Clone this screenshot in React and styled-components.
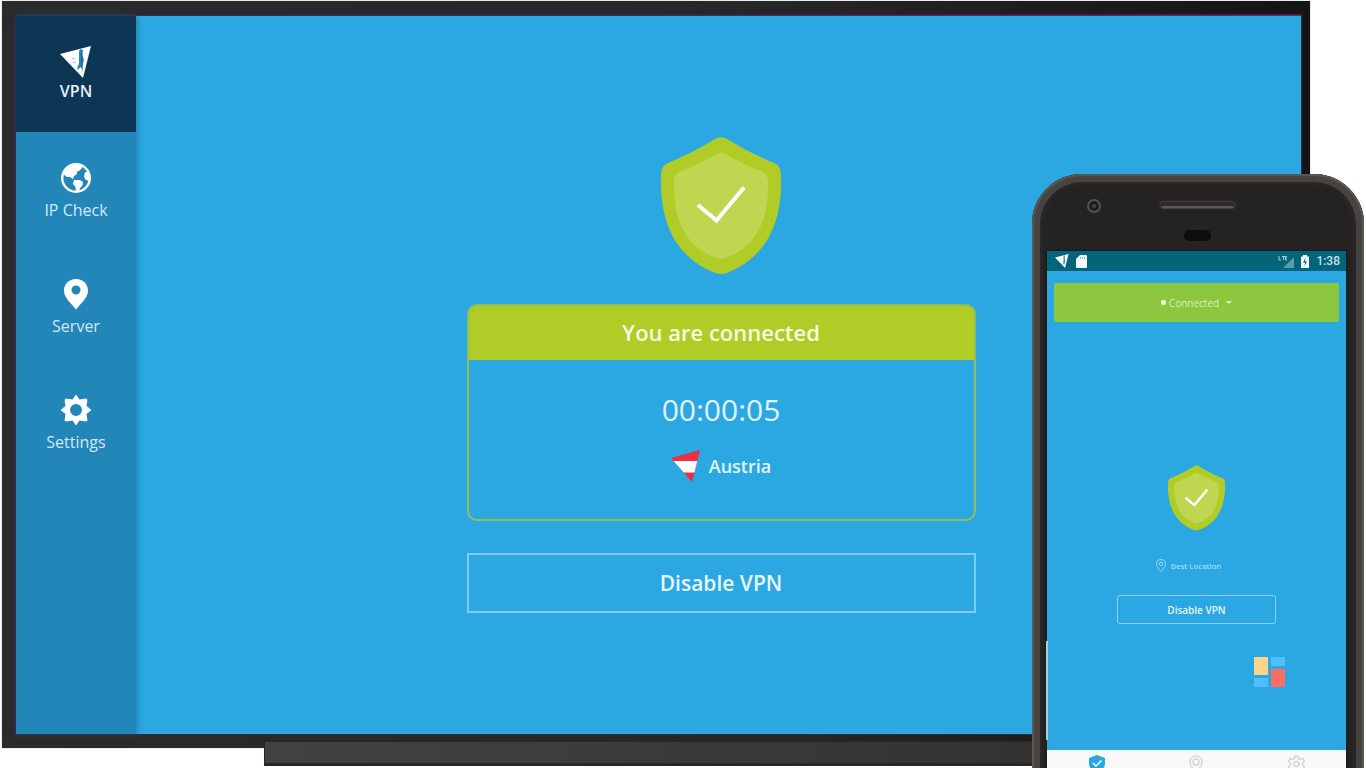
import React from "react";
import styled, { createGlobalStyle } from "styled-components";

const GlobalStyle = createGlobalStyle`
    * {
        box-sizing: border-box;
    }

    body {
        margin: 0;
        background: #ffffff;
        font-family: "Open Sans", "Noto Sans", sans-serif;
        color: #ffffff;
    }

    button {
        font-family: inherit;
        color: inherit;
        background: none;
        border: none;
        padding: 0;
        cursor: pointer;
    }
`;

const Scene = styled.div`
    position: relative;
    height: 100vh;
    min-height: 640px;
    overflow: hidden;
    padding: 1px 56px 0 2px;
`;

/* television */

const Television = styled.section`
    display: flex;
    flex-direction: column;
    min-height: calc(100% - 20px);
    padding: 14px 9px 14px 14px;
    background: linear-gradient(90deg, #2b2b2b, #262626 60%, #141414);
    box-shadow: 0 0 1px 0 #8f8f8c;
`;

const TvScreen = styled.div`
    display: flex;
    flex: 1;
    background: #2ba8e2;
    border-top: 1px solid #3a3046;
    box-shadow: 0 0 1px 1px #33283f;
    border-image: linear-gradient(90deg, #3a3046 50%, #7a2458) 1;
`;

const TvStand = styled.div`
    position: relative;
    height: 25px;
    margin: -7px 0 0 262px;
    background: linear-gradient(90deg, #424242, #383838 50%, #2a2a2a);
    border: 1px solid #2c2523;
    border-bottom-width: 3px;
`;

const Sidebar = styled.nav`
    width: 120px;
    flex-shrink: 0;
    background: #2287b8;
    box-shadow: 1px 0 6px rgba(20, 90, 130, 0.6);
`;

const NavItem = styled.button`
    display: flex;
    flex-direction: column;
    align-items: center;
    gap: ${props => props.$active ? "3px" : "6px"};
    width: 100%;
    height: 116px;
    padding-top: 30px;
    background: ${props => props.$active ? "#0c3654" : "transparent"};
    font-size: 16px;
    font-weight: ${props => props.$active ? 600 : 400};
    line-height: 20px;

    svg {
        display: block;
        flex-shrink: 0;
    }
`;

const NavLabel = styled.span`
    color: ${props => props.$active ? "#e8eef2" : "#d3e9f4"};
`;

const TvMain = styled.main`
    display: flex;
    flex: 1;
    flex-direction: column;
    align-items: center;
    padding: 121px 0 32px 5px;
`;

const StatusCard = styled.section`
    width: 509px;
    margin: 30px 0 32px;
    border: 2px solid #8dc05a;
    border-radius: 10px;
    overflow: hidden;
`;

const CardTitle = styled.h1`
    margin: -2px -2px 0;
    background: #b1cb27;
    font-size: 22px;
    font-weight: 600;
    line-height: 56px;
    text-align: center;
    color: #f7fae0;
`;

const CardBody = styled.div`
    display: flex;
    flex-direction: column;
    align-items: center;
    gap: 20px;
    padding: 30px 0 37px;
`;

const Timer = styled.div`
    font-size: 30px;
    line-height: 40px;
    color: #e2f3fc;
`;

const Country = styled.div`
    display: flex;
    align-items: center;
    gap: 9px;
    font-size: 18px;
    font-weight: 600;
    line-height: 32px;
    color: #e2f3fc;
`;

const DisableButton = styled.button`
    width: 509px;
    height: 60px;
    border: 2px solid #7fcaee;
    font-size: 21px;
    font-weight: 600;
    color: #e8f6fd;
`;

/* phone */

const Phone = styled.section`
    position: absolute;
    top: 174px;
    right: 2px;
    bottom: -42px;
    display: flex;
    flex-direction: column;
    width: 332px;
    padding: 0 18px 0 15px;
    border-radius: 50px 50px 0 0;
    background: #252322;
    box-shadow:
        inset 0 0 0 2px #5b5652,
        inset 0 0 0 8px #464341,
        inset 0 0 4px 10px #2c2a2a;
`;

const PhoneTop = styled.div`
    height: 77px;
    flex-shrink: 0;

    svg {
        display: block;
        width: 100%;
    }
`;

const PhoneScreen = styled.div`
    display: flex;
    flex: 1;
    flex-direction: column;
    align-items: center;
    background: #2ba8e2;
    box-shadow: 0 0 2px 1px #151a1d;
`;

const StatusBar = styled.div`
    display: flex;
    align-items: center;
    width: 100%;
    height: 20px;
    padding: 0 6px 0 8px;
    background: #03647a;
    font: 500 12px/20px Roboto, sans-serif;
    color: #c6e0e6;
`;

const StatusIcons = styled.div`
    display: flex;
    align-items: center;
    gap: 7px;
    margin-left: ${props => props.$end ? "auto" : "0"};
`;

const ConnectedBar = styled.button`
    display: flex;
    align-items: center;
    justify-content: center;
    gap: 3px;
    align-self: stretch;
    height: 39px;
    flex-shrink: 0;
    margin: 12px 7px 143px;
    border-radius: 2px;
    background: #8dc63f;
    font-size: 10px;
    color: #dcefbe;
`;

const Caret = styled.span`
    margin-left: 4px;
    border: 3px solid transparent;
    border-top-color: #dcefbe;
    border-bottom-width: 0;
`;

const Dot = styled.span`
    width: 5px;
    height: 5px;
    border-radius: 50%;
    background: #f4faea;
`;

const BestLocation = styled.div`
    display: flex;
    align-items: center;
    gap: 5px;
    height: 16px;
    margin: 26px 16px 22px 0;
    font-size: 8px;
    color: #bfe4f6;
`;

const PhoneButton = styled.button`
    width: 159px;
    height: 29px;
    flex-shrink: 0;
    border: 1px solid #8fd0f0;
    border-radius: 3px;
    font-size: 10px;
    font-weight: 600;
    color: #e4f4fc;
`;

const Tiles = styled.div`
    display: flex;
    gap: 3px;
    align-self: flex-end;
    margin: 33px 61px 0 0;
`;

const TileColumn = styled.div`
    display: flex;
    flex-direction: column;
    gap: 3px;
`;

const Tile = styled.span`
    width: 14px;
    height: ${props => props.$tall ? "18px" : "9px"};
    background: ${props => props.$color};
`;

const PhoneNav = styled.nav`
    display: grid;
    grid-template-columns: repeat(3, 1fr);
    align-items: start;
    width: 100%;
    height: 60px;
    flex-shrink: 0;
    margin-top: auto;
    padding-top: 5px;
    background: #f7f9f9;

    svg {
        display: block;
        margin: 0 auto;
    }
`;

const SideLight = styled.span`
    position: absolute;
    left: 14px;
    bottom: 70px;
    width: 2px;
    height: 99px;
    background: #a9cddd;
`;

const VpnLogo = ({ size = 32, streak = "#2a86b5" }) => (
    <svg width={size} height={size} viewBox="0 0 32 32">
        <path d="M0 8 31 0 23 32Z" fill="#ffffff" />
        <path d="M19 5 20.500 3 23 4 22.500 9 24 14 22.500 20 23 26 21 21 17 24 19 17Z" fill={streak} />
        <path d="M21.500 7 22 22" stroke="#0c3654" strokeWidth="1" opacity="0.5" />
        <path d="M12 12 15 13M13 17 16 16M17 20 18 22" stroke={streak} strokeWidth="1" opacity="0.5" />
    </svg>
);

const GlobeIcon = () => (
    <svg width="32" height="32" viewBox="0 0 32 32">
        <circle cx="16" cy="16" r="13.800" fill="none" stroke="#ffffff" strokeWidth="2.400" />
        <path d="M5 8 12 2 20 2.500 22 6 19 9 17 9.500 17 12 14 14 13 17 10 15 7 15 3 12Z" fill="#ffffff" />
        <path d="M14 18 20 18 23 20 22.500 23.500 20 26 19 29.500 16 30 15.500 25 13 22Z" fill="#ffffff" />
        <path d="M25 10 29 10 30.500 17 29 19 26 18 24 15Z" fill="#ffffff" />
    </svg>
);

const PinIcon = () => (
    <svg width="32" height="32" viewBox="0 0 32 32">
        <path
            d="M16 1C9 1 4 6 4 12.500 4 20 11 25 16 31.500 21 25 28 20 28 12.500 28 6 23 1 16 1ZM16 7.500a4.500 4.500 0 1 1 0 9 4.500 4.500 0 0 1 0-9Z"
            fill="#ffffff"
            fillRule="evenodd"
        />
    </svg>
);

const SettingsIcon = () => (
    <svg width="32" height="32" viewBox="0 0 32 32">
        <path
            d="M16 .5 19.500 5.500 26 4.500 27.500 6 26.500 12 31.500 16 26.500 20 27.500 26.500 26 27.500 19.500 26.500 16 31.500 12.500 26.500 6 27.500 4.500 26.500 5.500 20 .5 16 5.500 12 4.500 6 6 4.500 12.500 5.500ZM16 10a6 6 0 1 0 0 12 6 6 0 0 0 0-12Z"
            fill="#ffffff"
            fillRule="evenodd"
        />
    </svg>
);

const Shield = ({ width, height, stroke = 4 }) => (
    <svg width={width} height={height} viewBox="0 0 120 137">
        <path
            d="M53 2.500Q60-2 67 2.500C82 12 97 19 113 26Q120 29 120 37C122 86 105 120 67 135.500Q60 138.500 53 135.500C15 120-2 86 0 37Q0 29 7 26C23 19 38 12 53 2.500Z"
            fill="#b1cb27"
        />
        <path
            d="M55 17.500Q60 14 65 17.500C78 25 90 30 102 35Q107 38 107 44C108 84 95 109 66 120.500Q60 123 54 120.500C25 109 12 84 13 44Q13 38 18 35C30 30 42 25 55 17.500Z"
            fill="#c1d650"
        />
        <path d="M37 68 55.500 83.500 83 50.500" fill="none" stroke="#ffffff" strokeWidth={stroke} />
    </svg>
);

const AustriaFlag = () => (
    <svg width="29" height="32" viewBox="0 0 29 32">
        <clipPath id="flag-shape">
            <path d="M0 8 29 0 21 32Z" />
        </clipPath>
        <g clipPath="url(#flag-shape)">
            <rect width="29" height="32" fill="#ee2f3f" />
            <rect y="11" width="29" height="11.500" fill="#ffffff" />
        </g>
    </svg>
);

const navItems = [
    { label: "VPN", icon: <VpnLogo />, active: true },
    { label: "IP Check", icon: <GlobeIcon /> },
    { label: "Server", icon: <PinIcon /> },
    { label: "Settings", icon: <SettingsIcon /> },
];

const TvApp = () => (
    <Television>
        <TvScreen>
            <Sidebar>
                {navItems.map(item => (
                    <NavItem key={item.label} $active={item.active}>
                        {item.icon}
                        <NavLabel $active={item.active}>{item.label}</NavLabel>
                    </NavItem>
                ))}
            </Sidebar>
            <TvMain>
                <Shield width={120} height={137} />
                <StatusCard>
                    <CardTitle>You are connected</CardTitle>
                    <CardBody>
                        <Timer>00:00:05</Timer>
                        <Country><AustriaFlag /> Austria</Country>
                    </CardBody>
                </StatusCard>
                <DisableButton>Disable VPN</DisableButton>
            </TvMain>
        </TvScreen>
    </Television>
);

const PhoneApp = () => (
    <Phone>
        <PhoneTop>
            <svg height="77" viewBox="0 0 299 77">
                <circle cx="47" cy="32" r="6" fill="#1f1e1e" stroke="#55514f" strokeWidth="2" />
                <circle cx="47" cy="32" r="2" fill="#4a4745" />
                <rect x="113" y="27.500" width="75" height="7" rx="3" fill="#2c2a29" stroke="#45413f" />
                <path d="M115 33H186" stroke="#5d5856" strokeWidth="2" />
                <rect x="137" y="56" width="27" height="11" rx="5" fill="#0e0e0e" />
            </svg>
        </PhoneTop>
        <PhoneScreen>
            <StatusBar>
                <StatusIcons>
                    <VpnLogo size={14} streak="#6fa9b5" />
                    <svg width="11" height="13" viewBox="0 0 11 13">
                        <path d="M4 0H10Q11 0 11 1V12Q11 13 10 13H1Q0 13 0 12V4Z" fill="#f1fafb" />
                        <path d="M4.500 2V4M6.500 2V4M8.500 2V4" stroke="#8dbac4" />
                    </svg>
                </StatusIcons>
                <StatusIcons $end>
                    <svg width="16" height="13" viewBox="0 0 16 13">
                        <path d="M1 1V5H3M4 1.500H7M5.500 1.500V5M9 1.500H7.500V5H9M7.500 3H9" stroke="#a9cdd5" fill="none" />
                        <path d="M16 2V13H5Z" fill="#5c9bab" />
                    </svg>
                    <svg width="8" height="13" viewBox="0 0 8 13">
                        <path d="M2 0H6V1.500H8V13H0V1.500H2Z" fill="#f1fafb" />
                        <path d="M4.500 3 2 7.500H4L3.500 11 6 6.500H4Z" fill="#03647a" />
                    </svg>
                    <span>1:38</span>
                </StatusIcons>
            </StatusBar>
            <ConnectedBar><Dot /> Connected <Caret /></ConnectedBar>
            <Shield width={57} height={66} stroke={5} />
            <BestLocation>
                <svg width="10" height="13" viewBox="0 0 10 13" fill="none" stroke="#9dd6f1">
                    <path d="M5 .5C2 .5.5 2.500.5 4.800.5 8 5 12.500 5 12.500S9.500 8 9.500 4.800C9.500 2.500 8 .5 5 .5Z" />
                    <circle cx="5" cy="5" r="1.800" />
                </svg>
                Best Location
            </BestLocation>
            <PhoneButton>Disable VPN</PhoneButton>
            <Tiles>
                <TileColumn>
                    <Tile $tall $color="#ffd38a" />
                    <Tile $color="#4fc0ff" />
                </TileColumn>
                <TileColumn>
                    <Tile $color="#4fc0ff" />
                    <Tile $tall $color="#fc6d62" />
                </TileColumn>
            </Tiles>
            <PhoneNav>
                <button aria-label="VPN">
                    <svg width="16" height="18" viewBox="0 0 16 18">
                        <path d="M8 0 16 3V8C16 13 13 16 8 18 3 16 0 13 0 8V3Z" fill="#2ba8e2" />
                        <path d="M4 8 7 11 12.500 5.500" stroke="#ffffff" strokeWidth="1.500" fill="none" />
                    </svg>
                </button>
                <button aria-label="Location">
                    <svg width="14" height="18" viewBox="0 0 14 18" fill="none" stroke="#d3d6d6" strokeWidth="1.500">
                        <path d="M7 1C3 1 1 4 1 7 1 11 7 17 7 17S13 11 13 7C13 4 11 1 7 1Z" />
                        <circle cx="7" cy="7" r="3" />
                    </svg>
                </button>
                <button aria-label="Settings">
                    <svg width="17" height="18" viewBox="0 0 17 18" fill="none" stroke="#d3d6d6" strokeWidth="1.500">
                        <path d="M7 1H10L10.500 3.500 12.500 4.500 15 3.500 16.300 6.500 14.500 8V10L16.300 11.500 15 14.500 12.500 13.500 10.500 14.500 10 17H7L6.500 14.500 4.500 13.500 2 14.500.7 11.500 2.500 10V8L.7 6.500 2 3.500 4.500 4.500 6.500 3.500Z" />
                        <circle cx="8.500" cy="9" r="2.500" />
                    </svg>
                </button>
            </PhoneNav>
        </PhoneScreen>
        <SideLight />
    </Phone>
);

const App = () => (
    <>
        <GlobalStyle />
        <Scene>
            <TvApp />
            <TvStand />
            <PhoneApp />
        </Scene>
    </>
);

export default App;
